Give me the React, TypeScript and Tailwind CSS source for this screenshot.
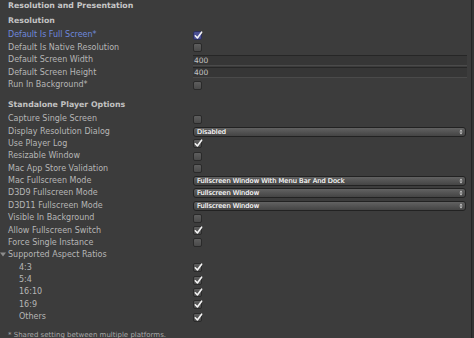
import React from "react";

const font = { fontFamily: '"DejaVu Sans", "Liberation Sans", sans-serif' };

function Check({ checked, focus }: { checked?: boolean; focus?: boolean }) {
  return (
    <div
      className={
        "relative w-[9px] h-[9px] rounded-[2px] border " +
        (focus
          ? "bg-[#4a4f93] border-[#2c2f5c]"
          : "bg-gradient-to-b from-[#5e5e5e] to-[#4a4a4a] border-[#2a2a2a]")
      }
    >
      {checked && (
        <svg
          className="absolute left-[0px] top-[-1px]"
          width="9"
          height="9"
          viewBox="0 0 9 9"
        >
          <path
            d="M1.3 4.8 L3.4 7 L7.6 1.2"
            fill="none"
            stroke="#f4f4f4"
            strokeWidth="1.6"
            strokeLinecap="round"
            strokeLinejoin="round"
          />
        </svg>
      )}
    </div>
  );
}

function TextField({ value }: { value: string }) {
  return (
    <div className="flex-1 h-[11px] bg-[#363636] border-t border-[#262626] border-b border-b-[#4a4a4a] flex items-center pl-[1px] text-[7.5px] text-[#c4c4c4] mr-[4px]">
      {value}
    </div>
  );
}

function Dropdown({ value }: { value: string }) {
  return (
    <div className="flex-1 h-[10px] rounded-[3px] border border-[#222] bg-gradient-to-b from-[#626262] to-[#444] flex items-center justify-between pl-[3px] pr-[2px] mr-[5px] text-[6.7px] text-[#e2e2e2] [text-shadow:0_0_0.4px_#fff]">
      <span>{value}</span>
      <svg width="4" height="6" viewBox="0 0 4 6">
        <path d="M0.5 2.4 L2 0.6 L3.5 2.4 Z" fill="#cfcfcf" />
        <path d="M0.5 3.6 L2 5.4 L3.5 3.6 Z" fill="#cfcfcf" />
      </svg>
    </div>
  );
}

type Row = {
  label: string;
  kind: "check" | "text" | "drop" | "none";
  checked?: boolean;
  focus?: boolean;
  value?: string;
  blue?: boolean;
  indent?: boolean;
  fold?: boolean;
};

function PropRow({ r, h }: { r: Row; h: string }) {
  return (
    <div className={"flex items-center shrink-0 " + h}>
      <div
        className={
          "relative w-[193px] shrink-0 text-[8px] leading-none whitespace-nowrap " +
          (r.indent ? "pl-[19px] " : "pl-[8px] ") +
          (r.blue ? "text-[#6e88dd]" : "text-[#b6b6b6]")
        }
      >
        {r.fold && (
          <svg
            className="absolute left-[0px] top-[1px]"
            width="6"
            height="5"
            viewBox="0 0 6 5"
          >
            <path d="M0 0.5 L6 0.5 L3 4.5 Z" fill="#8c8c8c" />
          </svg>
        )}
        {r.label}
      </div>
      <div className="flex-1 flex items-center">
        {r.kind === "check" && <Check checked={r.checked} focus={r.focus} />}
        {r.kind === "text" && <TextField value={r.value || ""} />}
        {r.kind === "drop" && <Dropdown value={r.value || ""} />}
      </div>
    </div>
  );
}

const resolutionRows: Row[] = [
  { label: "Default Is Full Screen*", kind: "check", checked: true, focus: true, blue: true },
  { label: "Default Is Native Resolution", kind: "check" },
  { label: "Default Screen Width", kind: "text", value: "400" },
  { label: "Default Screen Height", kind: "text", value: "400" },
  { label: "Run In Background*", kind: "check" },
];

const standaloneRows: Row[] = [
  { label: "Capture Single Screen", kind: "check" },
  { label: "Display Resolution Dialog", kind: "drop", value: "Disabled" },
  { label: "Use Player Log", kind: "check", checked: true },
  { label: "Resizable Window", kind: "check" },
  { label: "Mac App Store Validation", kind: "check" },
  { label: "Mac Fullscreen Mode", kind: "drop", value: "Fullscreen Window With Menu Bar And Dock" },
  { label: "D3D9 Fullscreen Mode", kind: "drop", value: "Fullscreen Window" },
  { label: "D3D11 Fullscreen Mode", kind: "drop", value: "Fullscreen Window" },
  { label: "Visible In Background", kind: "check" },
  { label: "Allow Fullscreen Switch", kind: "check", checked: true },
  { label: "Force Single Instance", kind: "check" },
  { label: "Supported Aspect Ratios", kind: "none", fold: true },
  { label: "4:3", kind: "check", checked: true, indent: true },
  { label: "5:4", kind: "check", checked: true, indent: true },
  { label: "16:10", kind: "check", checked: true, indent: true },
  { label: "16:9", kind: "check", checked: true, indent: true },
  { label: "Others", kind: "check", checked: true, indent: true },
];

export default function App() {
  return (
    <div
      className="w-[474px] h-[338px] bg-[#3c3c3c] overflow-hidden flex"
      style={font}
    >
      <div className="flex-1 flex flex-col">
        <div className="h-[11px] shrink-0 flex items-center pl-[8px] text-[7.8px] font-bold text-[#c6c6c6] leading-none">
          Resolution and Presentation
        </div>
        <div className="h-[12px] shrink-0 mt-[4px] flex items-center pl-[8px] text-[7.8px] font-bold text-[#c2c2c2] leading-none">
          Resolution
        </div>
        <div className="mt-[2px] shrink-0 flex flex-col">
          {resolutionRows.map((r) => (
            <PropRow key={r.label} r={r} h="h-[12.5px]" />
          ))}
        </div>
        <div className="h-[12px] shrink-0 mt-[7.5px] flex items-center pl-[8px] text-[7.8px] font-bold text-[#c2c2c2] leading-none">
          Standalone Player Options
        </div>
        <div className="mt-[2px] shrink-0 flex flex-col">
          {standaloneRows.map((r) => (
            <PropRow key={r.label} r={r} h="h-[12.375px]" />
          ))}
        </div>
        <div className="h-[12px] shrink-0 mt-[6px] flex items-center pl-[8px] text-[7px] text-[#a8a8a8] leading-none">
          * Shared setting between multiple platforms.
        </div>
      </div>
      <div className="w-[3px] border-l border-[#262626] bg-[#353535]" />
    </div>
  );
}
